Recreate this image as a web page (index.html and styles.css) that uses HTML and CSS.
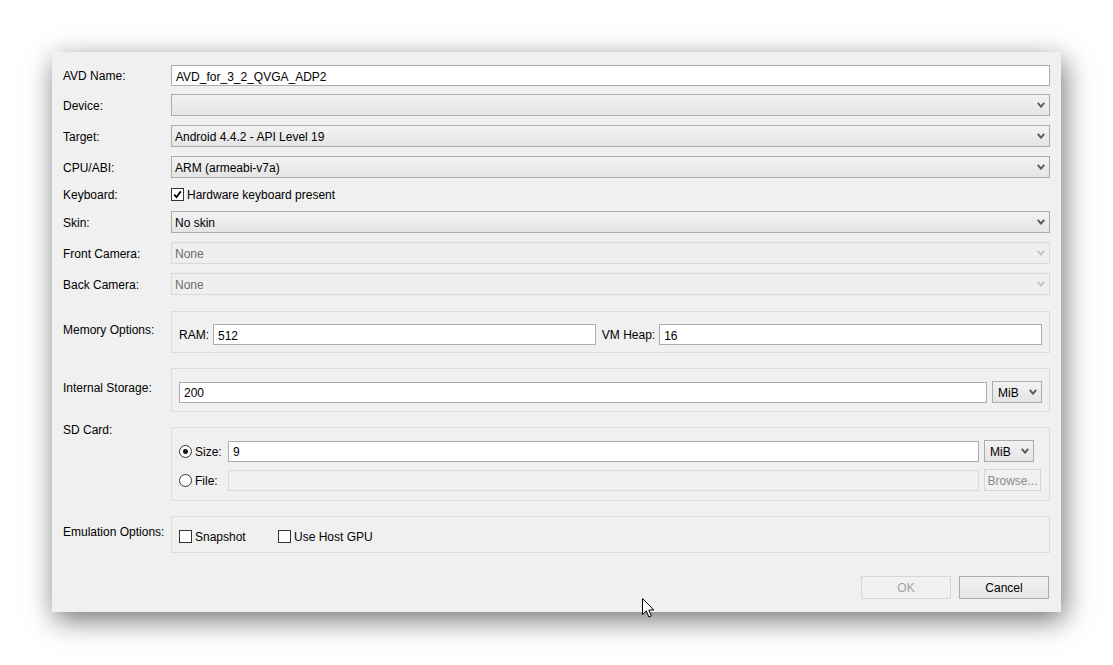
FILE: index.html
```html
<!DOCTYPE html>
<html lang="en">
<head>
    <meta charset="UTF-8">
    <title>Create new Android Virtual Device (AVD)</title>
    <link rel="stylesheet" href="styles.css">
</head>
<body>

<div class="dialog">
    <div class="row first">
        <span class="label">AVD Name:</span>
        <input class="text" type="text" value="AVD_for_3_2_QVGA_ADP2">
    </div>
    <div class="row tight">
        <span class="label">Device:</span>
        <div class="combo">
            <span></span>
            <svg class="arrow" viewBox="0 0 8 6"><path d="M0.7 0.8 L4 4.6 L7.3 0.8"/></svg>
        </div>
    </div>
    <div class="row">
        <span class="label">Target:</span>
        <div class="combo">
            <span>Android 4.4.2 - API Level 19</span>
            <svg class="arrow" viewBox="0 0 8 6"><path d="M0.7 0.8 L4 4.6 L7.3 0.8"/></svg>
        </div>
    </div>
    <div class="row">
        <span class="label">CPU/ABI:</span>
        <div class="combo">
            <span>ARM (armeabi-v7a)</span>
            <svg class="arrow" viewBox="0 0 8 6"><path d="M0.7 0.8 L4 4.6 L7.3 0.8"/></svg>
        </div>
    </div>
    <div class="row check-row">
        <span class="label">Keyboard:</span>
        <span class="check">
            <svg viewBox="0 0 11 11"><path d="M2.2 5.6 L4.5 8 L8.8 2.4"/></svg>
        </span>
        <span class="check-text">Hardware keyboard present</span>
    </div>
    <div class="row after-check">
        <span class="label">Skin:</span>
        <div class="combo">
            <span>No skin</span>
            <svg class="arrow" viewBox="0 0 8 6"><path d="M0.7 0.8 L4 4.6 L7.3 0.8"/></svg>
        </div>
    </div>
    <div class="row">
        <span class="label">Front Camera:</span>
        <div class="combo disabled">
            <span>None</span>
            <svg class="arrow" viewBox="0 0 8 6"><path d="M0.7 0.8 L4 4.6 L7.3 0.8"/></svg>
        </div>
    </div>
    <div class="row">
        <span class="label">Back Camera:</span>
        <div class="combo disabled">
            <span>None</span>
            <svg class="arrow" viewBox="0 0 8 6"><path d="M0.7 0.8 L4 4.6 L7.3 0.8"/></svg>
        </div>
    </div>

    <div class="row group-row memory">
        <span class="label">Memory Options:</span>
        <div class="group">
            <span class="field-label">RAM:</span>
            <input class="text" type="text" value="512">
            <span class="field-label heap">VM Heap:</span>
            <input class="text" type="text" value="16">
        </div>
    </div>

    <div class="row group-row storage">
        <span class="label">Internal Storage:</span>
        <div class="group">
            <input class="text" type="text" value="200">
            <div class="combo unit">
                <span>MiB</span>
                <svg class="arrow" viewBox="0 0 8 6"><path d="M0.7 0.8 L4 4.6 L7.3 0.8"/></svg>
            </div>
        </div>
    </div>

    <div class="row group-row sdcard">
        <span class="label">SD Card:</span>
        <div class="group sd-grid">
            <span class="option">
                <span class="radio on"></span>
                <span>Size:</span>
            </span>
            <input class="text" type="text" value="9">
            <div class="combo unit">
                <span>MiB</span>
                <svg class="arrow" viewBox="0 0 8 6"><path d="M0.7 0.8 L4 4.6 L7.3 0.8"/></svg>
            </div>
            <span class="option">
                <span class="radio"></span>
                <span>File:</span>
            </span>
            <input class="text off" type="text" disabled>
            <button class="btn small" disabled>Browse...</button>
        </div>
    </div>

    <div class="row group-row emulation">
        <span class="label">Emulation Options:</span>
        <div class="group">
            <span class="option box-opt snapshot">
                <span class="check"></span>
                <span class="check-text">Snapshot</span>
            </span>
            <span class="option box-opt">
                <span class="check"></span>
                <span class="check-text">Use Host GPU</span>
            </span>
        </div>
    </div>

    <div class="buttons">
        <button class="btn" disabled>OK</button>
        <button class="btn">Cancel</button>
    </div>
</div>

<svg class="cursor" viewBox="0 0 13 21">
    <path d="M0.5 0.5 L0.5 16.5 L4.3 12.9 L6.9 19 L9.3 18 L6.8 12 L11.8 12 Z"/>
</svg>

</body>
</html>
```

FILE: styles.css
```css
html, body {
    margin: 0;
    background-color: #fff;
}
body {
    box-sizing: border-box;
    height: 665px;
    padding: 52px 0 0 52px;
    overflow: hidden;
    font-family: 'Liberation Sans', Arial, sans-serif;
    font-size: 12px;
    line-height: 15px;
    color: #000;
}
.dialog {
    box-sizing: border-box;
    width: 1009px;
    height: 560px;
    padding: 13px 11px 0 11px;
    background-color: #f0f0f0;
    box-shadow: 3px 8px 26px rgba(0, 0, 0, 0.55);
    display: flex;
    flex-direction: column;
}
.row {
    display: flex;
    align-items: center;
    margin-top: 9px;
}
.row.first {
    margin-top: 0;
}
.row.tight {
    margin-top: 8px;
}
.row.check-row {
    margin-top: 10px;
    height: 13px;
}
.row.after-check {
    margin-top: 10px;
}
.label {
    width: 108px;
    flex: none;
    padding-top: 2px;
}
.text {
    box-sizing: border-box;
    height: 21px;
    flex: 1;
    min-width: 0;
    margin: 0;
    padding: 2px 4px 0 4px;
    border: 1px solid #abadb3;
    background-color: #fff;
    font: inherit;
    color: #000;
    outline: none;
}
.text.off {
    border-color: #d9d9d9;
    background-color: #f0f0f0;
}
.combo {
    box-sizing: border-box;
    height: 22px;
    flex: 1;
    display: flex;
    align-items: center;
    justify-content: space-between;
    padding: 0 4px 0 3px;
    border: 1px solid #acacac;
    background: linear-gradient(#f2f2f2, #e5e5e5);
}
.combo span {
    padding-top: 2px;
}
.combo.disabled {
    border-color: #d9d9d9;
    background: #efefef;
    color: #6d6d6d;
}
.combo.unit {
    flex: none;
    width: 50px;
    padding-left: 5px;
}
.arrow {
    width: 8px;
    height: 6px;
}
.arrow path {
    fill: none;
    stroke: #5b5b5b;
    stroke-width: 2;
}
.combo.disabled .arrow path {
    stroke: #c2c2c2;
}
.check {
    box-sizing: border-box;
    width: 13px;
    height: 13px;
    flex: none;
    border: 1px solid #333;
    background-color: #fff;
    display: flex;
}
.check svg {
    width: 11px;
    height: 11px;
}
.check svg path {
    fill: none;
    stroke: #000;
    stroke-width: 1.8;
}
.check-text {
    margin-left: 3px;
    padding-top: 2px;
}

/* group boxes */
.group-row {
    align-items: flex-start;
    margin-top: 15px;
}
.group-row.memory {
    margin-top: 16px;
}
.memory .label {
    margin-top: 10px;
}
.storage .label {
    margin-top: 11px;
}
.sdcard .label {
    margin-top: -6px;
}
.emulation .label {
    margin-top: 7px;
}
.group {
    box-sizing: border-box;
    flex: 1;
    display: flex;
    align-items: center;
    padding: 12px 7px 7px 7px;
    border: 1px solid #dcdcdc;
}
.field-label {
    margin-right: 4px;
    padding-top: 2px;
}
.field-label.heap {
    margin-left: 6px;
}
.storage .group {
    padding-bottom: 8px;
    gap: 5px;
}
.sd-grid {
    display: grid;
    grid-template-columns: 44px 1fr 57px;
    grid-auto-rows: 22px;
    column-gap: 5px;
    row-gap: 7px;
    padding: 12px 8px 9px 7px;
}
.option {
    display: flex;
    align-items: center;
}
.option > span:last-child {
    padding-top: 2px;
}
.option.box-opt {
    height: 13px;
}
.radio {
    box-sizing: border-box;
    width: 13px;
    height: 13px;
    margin-right: 3px;
    border: 1px solid #333;
    border-radius: 50%;
    background-color: #fff;
    display: flex;
    align-items: center;
    justify-content: center;
}
.radio.on::after {
    content: '';
    width: 5px;
    height: 5px;
    border-radius: 50%;
    background-color: #1a1a1a;
}
.emulation .group {
    height: 37px;
    padding: 13px 7px 9px 7px;
}
.option.snapshot {
    width: 99px;
}

/* buttons */
.btn {
    box-sizing: border-box;
    width: 90px;
    height: 23px;
    margin: 0;
    padding: 2px 0 0 0;
    border: 1px solid #adadad;
    background: linear-gradient(#f2f2f2, #e6e6e6);
    font: inherit;
    color: #000;
}
.btn:disabled {
    border-color: #d6d6d6;
    background: #f0f0f0;
    color: #a0a0a0;
}
.btn.small {
    width: 57px;
    height: 22px;
    color: #8a8a8a;
}
.buttons {
    display: flex;
    justify-content: flex-end;
    gap: 8px;
    margin-top: 23px;
    margin-right: 1px;
}
.cursor {
    position: absolute;
    left: 642px;
    top: 598px;
    width: 13px;
    height: 21px;
}
.cursor path {
    fill: #fff;
    stroke: #000;
    stroke-width: 1;
}
```
